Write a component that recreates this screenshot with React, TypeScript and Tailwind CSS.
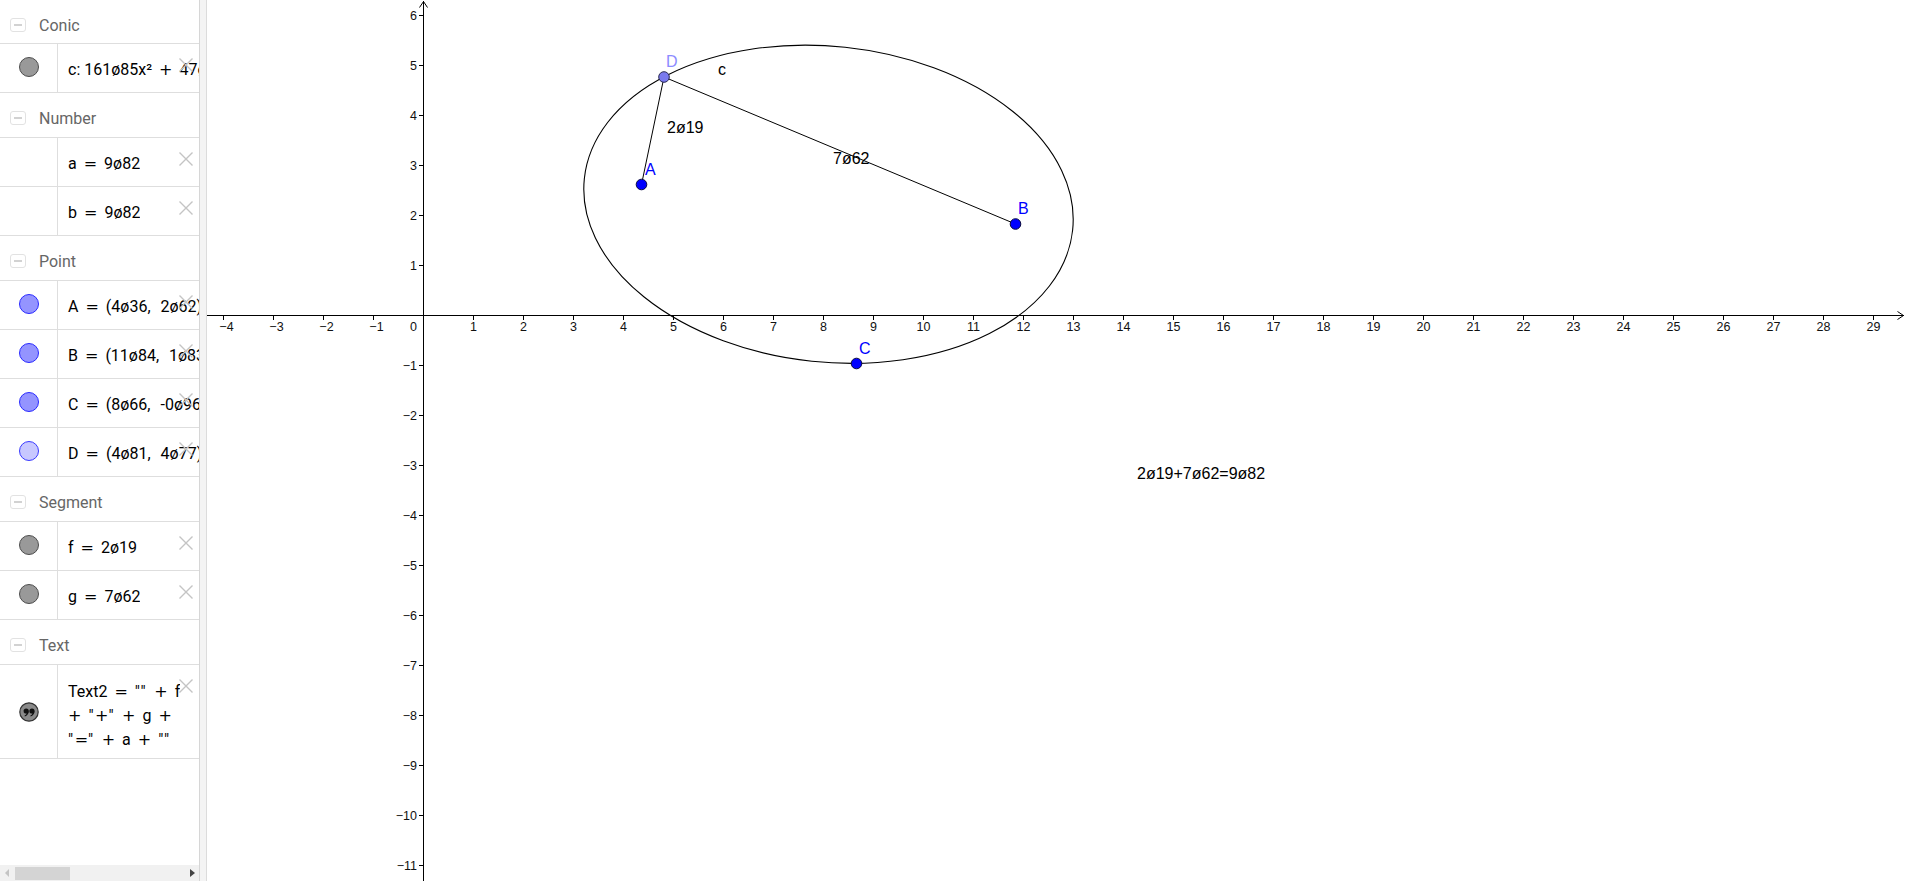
import React from "react";

const OX = 423.5;
const OY = 315.5;
const U = 50;

const XIcon = () => (
  <svg className="absolute right-[5px] top-[13px]" width="16" height="16" viewBox="0 0 16 16">
    <path d="M1.5 1.5 L14.5 14.5 M14.5 1.5 L1.5 14.5" stroke="#c4c4c4" strokeWidth="1.4" fill="none" />
  </svg>
);

const Dot = ({ fill, stroke }: { fill: string; stroke: string }) => (
  <div className="h-[20px] w-[20px] rounded-full border" style={{ background: fill, borderColor: stroke }} />
);

const QuoteIcon = () => (
  <svg width="20" height="20" viewBox="0 0 20 20">
    <circle cx="10" cy="10" r="9.2" fill="#8a8a8a" stroke="#333" strokeWidth="1.2" />
    <circle cx="7.2" cy="9" r="2.6" fill="#111" />
    <path d="M9.6 9.2 C9.6 12 8.3 13.6 5.8 14.4 L5.6 13.5 C6.9 12.9 7.6 12 7.6 11 Z" fill="#111" />
    <circle cx="13" cy="9" r="2.6" fill="#111" />
    <path d="M15.4 9.2 C15.4 12 14.1 13.6 11.6 14.4 L11.4 13.5 C12.7 12.9 13.4 12 13.4 11 Z" fill="#111" />
  </svg>
);

const Op = ({ c, l = true, r = true }: { c: string; l?: boolean; r?: boolean }) => (
  <span className={`font-['DejaVu_Sans',sans-serif] ${l ? "ml-[7px]" : ""} ${r ? "mr-[7px]" : ""}`}>{c}</span>
);

const Q = ({ n = 1 }: { n?: number }) => (
  <span className="tracking-[1.5px]">{n === 2 ? '""' : '"'}</span>
);

const Comma = () => <span className="mr-[10px]">,</span>;

const Header = ({ label, h = "h-[45px]" }: { label: string; h?: string }) => (
  <div className={`flex ${h} shrink-0 items-start border-b border-[#dedede] pl-[10px] pt-[14px]`}>
    <div className="mt-[4px] flex h-[14px] w-[16px] items-center justify-center rounded-[3px] border border-[#e2e2e2]">
      <div className="h-[2px] w-[8px] bg-[#d2d2d2]" />
    </div>
    <span className="ml-[13px] text-[16px] leading-6 text-[#666666]">{label}</span>
  </div>
);

const Row = ({ icon, children }: { icon?: React.ReactNode; children: React.ReactNode }) => (
  <div className="relative flex h-[49px] shrink-0 border-b border-[#dedede]">
    <div className="flex w-[58px] shrink-0 justify-center border-r border-[#dedede] pt-[13px]">{icon}</div>
    <div className="overflow-hidden whitespace-nowrap pl-[10px] pt-[14px] text-[16px] leading-6 text-black">{children}</div>
    <XIcon />
  </div>
);

const gray = <Dot fill="#999999" stroke="#4d4d4d" />;
const blue = <Dot fill="#9494ff" stroke="#2a2aff" />;
const light = <Dot fill="#c8c8ff" stroke="#3a3aff" />;

function Sidebar() {
  return (
    <div className="flex h-full w-[200px] shrink-0 flex-col border-r border-[#d6d6d6] font-['Roboto',sans-serif]">
      <Header label="Conic" h="h-[44px]" />
      <Row icon={gray}>
        c: 161ø85x²<Op c="+" />47ø36xy
      </Row>
      <Header label="Number" />
      <Row>
        a<Op c="=" />9ø82
      </Row>
      <Row>
        b<Op c="=" />9ø82
      </Row>
      <Header label="Point" />
      <Row icon={blue}>
        A<Op c="=" />(4ø36<Comma />2ø62)
      </Row>
      <Row icon={blue}>
        B<Op c="=" />(11ø84<Comma />1ø83)
      </Row>
      <Row icon={blue}>
        C<Op c="=" />(8ø66<Comma />-0ø96)
      </Row>
      <Row icon={light}>
        D<Op c="=" />(4ø81<Comma />4ø77)
      </Row>
      <Header label="Segment" />
      <Row icon={gray}>
        f<Op c="=" />2ø19
      </Row>
      <Row icon={gray}>
        g<Op c="=" />7ø62
      </Row>
      <Header label="Text" />
      <div className="relative flex h-[94px] shrink-0 border-b border-[#dedede]">
        <div className="flex w-[58px] shrink-0 items-center justify-center border-r border-[#dedede]">
          <QuoteIcon />
        </div>
        <div className="overflow-hidden whitespace-nowrap pl-[10px] pt-[15px] text-[16px] leading-6 text-black">
          <div>
            Text2<Op c="=" />
            <Q n={2} />
            <Op c="+" />f
          </div>
          <div>
            <Op c="+" l={false} />
            <Q />
            <span className="font-['DejaVu_Sans',sans-serif]">+</span>
            <Q />
            <Op c="+" />g<Op c="+" />
          </div>
          <div>
            <Q />
            <span className="font-['DejaVu_Sans',sans-serif]">=</span>
            <Q />
            <Op c="+" />a<Op c="+" />
            <Q n={2} />
          </div>
        </div>
        <XIcon />
      </div>
      <div className="flex-1" />
      <div className="relative flex h-[16px] shrink-0 items-center bg-[#f1f1f1]">
        <div className="ml-[5px] h-0 w-0 border-y-[4px] border-r-[4px] border-y-transparent border-r-[#c4c4c4]" />
        <div className="ml-[6px] h-[13px] w-[55px] bg-[#d4d4d4]" />
        <div className="flex-1" />
        <div className="mr-[4px] h-0 w-0 border-y-[4px] border-l-[5px] border-y-transparent border-l-[#444444]" />
      </div>
    </div>
  );
}

function Canvas() {
  const xs: number[] = [];
  for (let i = -4; i <= 29; i++) if (i !== 0) xs.push(i);
  const ys: number[] = [];
  for (let j = -11; j <= 6; j++) if (j !== 0) ys.push(j);
  const A = { x: OX + 4.36 * U, y: OY - 2.62 * U };
  const B = { x: OX + 11.84 * U, y: OY - 1.83 * U };
  const C = { x: OX + 8.66 * U, y: OY + 0.96 * U };
  const D = { x: OX + 4.81 * U, y: OY - 4.77 * U };
  const cx = (A.x + B.x) / 2;
  const cy = (A.y + B.y) / 2;
  const ang = (Math.atan2(B.y - A.y, B.x - A.x) * 180) / Math.PI;
  const lbl = { fontFamily: "'Liberation Sans', Arial, sans-serif", fontSize: 16 };
  const axl = { fontFamily: "'Liberation Sans', Arial, sans-serif", fontSize: 12.5 };
  const fmt = (n: number) => (n < 0 ? "\u2212" + Math.abs(n) : String(n));
  return (
    <div className="h-full flex-1 overflow-hidden bg-white">
      <svg className="block" width="1699" height="881" viewBox="207 0 1699 881">
        <line x1="207" y1={OY} x2="1904" y2={OY} stroke="#000" strokeWidth="1" />
        <line x1={OX} y1="1" x2={OX} y2="881" stroke="#000" strokeWidth="1" />
        <polyline points={`1897.5,311.5 1903.5,315.5 1897.5,319.5`} fill="none" stroke="#000" strokeWidth="1" />
        <polyline points={`419.5,7.5 423.5,1.5 427.5,7.5`} fill="none" stroke="#000" strokeWidth="1" />
        {xs.map((i) => (
          <g key={"x" + i}>
            <line x1={OX + i * U} y1={315} x2={OX + i * U} y2={320} stroke="#000" strokeWidth="1" />
            <text x={OX + i * U + (i < 0 ? 3 : 0)} y={331} textAnchor="middle" style={axl} fill="#111">
              {fmt(i)}
            </text>
          </g>
        ))}
        {ys.map((j) => (
          <g key={"y" + j}>
            <line x1={419} y1={OY - j * U} x2={424} y2={OY - j * U} stroke="#000" strokeWidth="1" />
            <text x={417} y={OY - j * U + 4.5} textAnchor="end" style={axl} fill="#111">
              {fmt(j)}
            </text>
          </g>
        ))}
        <text x={417} y={331} textAnchor="end" style={axl} fill="#111">
          0
        </text>
        <ellipse cx={cx} cy={cy} rx={4.91 * U} ry={3.158 * U} transform={`rotate(${ang} ${cx} ${cy})`} fill="none" stroke="#000" strokeWidth="1.1" />
        <line x1={D.x} y1={D.y} x2={A.x} y2={A.y} stroke="#000" strokeWidth="1" />
        <line x1={D.x} y1={D.y} x2={B.x} y2={B.y} stroke="#000" strokeWidth="1" />
        <circle cx={A.x} cy={A.y} r="5.3" fill="#0000ff" stroke="#0a0a40" strokeWidth="1" />
        <circle cx={B.x} cy={B.y} r="5.3" fill="#0000ff" stroke="#0a0a40" strokeWidth="1" />
        <circle cx={C.x} cy={C.y} r="5.3" fill="#0000ff" stroke="#0a0a40" strokeWidth="1" />
        <circle cx={D.x} cy={D.y} r="5.3" fill="#7a7aee" stroke="#2a2a55" strokeWidth="1" />
        <text x={645} y={175} style={lbl} fill="#0000ff">A</text>
        <text x={1018} y={214} style={lbl} fill="#0000ff">B</text>
        <text x={859} y={354} style={lbl} fill="#0000ff">C</text>
        <text x={666} y={67} style={lbl} fill="#8c8cff">D</text>
        <text x={718} y={75} style={lbl} fill="#000">c</text>
        <text x={667} y={133} style={lbl} fill="#000">2ø19</text>
        <text x={833} y={164} style={lbl} fill="#000">7ø62</text>
        <text x={1137} y={479} style={lbl} fill="#000">2ø19+7ø62=9ø82</text>
      </svg>
    </div>
  );
}

export default function App() {
  return (
    <div className="flex h-[881px] w-[1906px] overflow-hidden bg-white">
      <Sidebar />
      <div className="h-full w-[7px] shrink-0 border-r border-[#dcdcdc] bg-[#f4f4f4]" />
      <Canvas />
    </div>
  );
}
